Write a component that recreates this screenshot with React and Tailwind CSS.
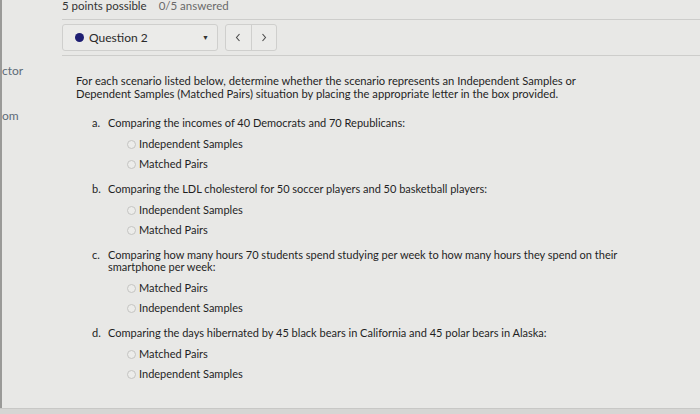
import React from "react"

const items = [
  {
    label: "a.",
    text: "Comparing the incomes of 40 Democrats and 70 Republicans:",
    options: ["Independent Samples", "Matched Pairs"],
  },
  {
    label: "b.",
    text: "Comparing the LDL cholesterol for 50 soccer players and 50 basketball players:",
    options: ["Independent Samples", "Matched Pairs"],
  },
  {
    label: "c.",
    text: "Comparing how many hours 70 students spend studying per week to how many hours they spend on their smartphone per week:",
    options: ["Matched Pairs", "Independent Samples"],
  },
  {
    label: "d.",
    text: "Comparing the days hibernated by 45 black bears in California and 45 polar bears in Alaska:",
    options: ["Matched Pairs", "Independent Samples"],
  },
]

function Radio() {
  return (
    <span className="inline-block h-[9px] w-[9px] shrink-0 rounded-full border border-[#c4c4c2] bg-[#ececea]" />
  )
}

function Chevron({ dir }) {
  return (
    <svg width="6" height="9" viewBox="0 0 6 9" fill="none" stroke="#4a4a4a" strokeWidth="1.1">
      {dir === "left" ? <path d="M4.5 1 L1.5 4.5 L4.5 8" /> : <path d="M1.5 1 L4.5 4.5 L1.5 8" />}
    </svg>
  )
}

export default function App() {
  return (
    <div
      className="flex h-[414px] w-[700px] flex-col overflow-hidden bg-[#e8e8e6] text-[#1f1f1f]"
      style={{ fontFamily: "Lato, 'Open Sans', sans-serif" }}
    >
      <div className="flex h-[408px] shrink-0">
        {/* sidebar, cut off */}
        <div className="w-[62px] shrink-0 border-l-2 border-[#9a9a98] bg-[#e8e8e6]">
          <div className="mt-[63px] text-[12px] leading-[16px] text-[#5d6b78]">ctor</div>
          <div className="mt-[29px] text-[12px] leading-[16px] text-[#5d6b78]">om</div>
        </div>

        {/* main */}
        <div className="flex min-w-0 flex-1 flex-col bg-[#e8e8e6]">
          {/* header */}
          <div className="h-[20px] overflow-hidden border-b border-[#cdcdcb]">
            <div className="-mt-[2px] flex gap-[12px] text-[11.5px] leading-[16px]">
              <span className="text-[#333]">5 points possible</span>
              <span className="text-[#6a6a6a]">0/5 answered</span>
            </div>
          </div>

          {/* question nav */}
          <div className="flex gap-[7px] border-b border-[#cdcdcb] pt-[4px] pb-[4px]">
            <div className="flex h-[27px] w-[156px] items-center rounded-[3px] border border-[#cfcfcd] bg-[#ebebe9] pl-[12px] pr-[8px]">
              <span className="h-[9px] w-[9px] rounded-full bg-[#1e1e72]" />
              <span className="ml-[5px] text-[12px] text-[#2a2a2a]">Question 2</span>
              <span className="ml-auto text-[7px] text-[#333]">▼</span>
            </div>
            <div className="flex h-[27px] w-[52px] rounded-[3px] border border-[#cfcfcd] bg-[#ebebe9]">
              <div className="flex flex-1 items-center justify-center border-r border-[#cfcfcd]">
                <Chevron dir="left" />
              </div>
              <div className="flex flex-1 items-center justify-center">
                <Chevron dir="right" />
              </div>
            </div>
          </div>

          {/* body */}
          <div className="pl-[14px] pr-[50px]">
            <p className="mt-[18px] text-[11.2px] leading-[13px]">
              For each scenario listed below, determine whether the scenario represents an Independent Samples or
              <br />
              Dependent Samples (Matched Pairs) situation by placing the appropriate letter in the box provided.
            </p>

            <div className="mt-[17px] flex flex-col gap-[9px] pl-[16px]">
              {items.map((item) => (
                <div key={item.label}>
                  <div className="flex text-[11px] leading-[12px]">
                    <span className="w-[16px] shrink-0">{item.label}</span>
                    <span className="max-w-[520px]">{item.text}</span>
                  </div>
                  <div className="mt-[5px] flex flex-col pl-[35px]">
                    {item.options.map((o) => (
                      <div key={o} className="flex h-[20px] items-center gap-[3px] text-[11px]">
                        <Radio />
                        <span>{o}</span>
                      </div>
                    ))}
                  </div>
                </div>
              ))}
            </div>
          </div>
        </div>
      </div>

      {/* bottom edge */}
      <div className="flex-1 border-t border-[#c8c8c6] bg-[#d6d6d4]" />
    </div>
  )
}
